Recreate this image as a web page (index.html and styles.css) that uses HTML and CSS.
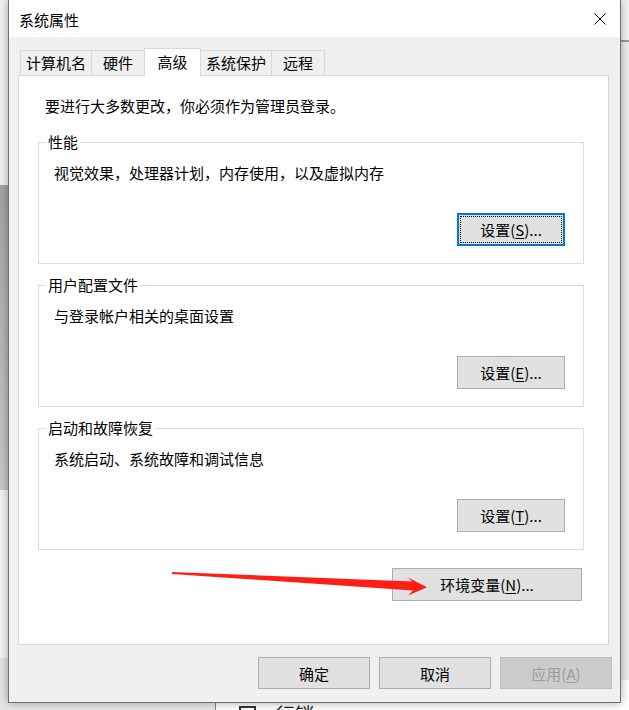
FILE: index.html
```html
<!DOCTYPE html>
<html lang="zh-CN">
<head>
    <meta charset="UTF-8">
    <meta name="viewport" content="width=device-width, initial-scale=1.0">
    <title>系统属性</title>
    <link rel="stylesheet" href="styles.css">
</head>
<body>
    <div class="desktop">
        <div class="bg-app">
            <span class="bg-icon"></span>
            <span class="bg-text">行销</span>
        </div>

        <div class="window">
            <div class="titlebar">
                <span class="title">系统属性</span>
                <span class="close">
                    <svg width="12" height="12" viewBox="0 0 12 12">
                        <path d="M0.5 0.5L11.5 11.5M11.5 0.5L0.5 11.5" stroke="#000" stroke-width="1" fill="none"/>
                    </svg>
                </span>
            </div>

            <div class="tabs">
                <div class="tab">计算机名</div>
                <div class="tab">硬件</div>
                <div class="tab active">高级</div>
                <div class="tab">系统保护</div>
                <div class="tab">远程</div>
            </div>

            <div class="panel">
                <p class="notice">要进行大多数更改，你必须作为管理员登录。</p>

                <fieldset class="group">
                    <legend>性能</legend>
                    <p class="desc">视觉效果，处理器计划，内存使用，以及虚拟内存</p>
                    <div class="actions">
                        <button class="btn btn-set focus">设置(<u>S</u>)...</button>
                    </div>
                </fieldset>

                <fieldset class="group">
                    <legend>用户配置文件</legend>
                    <p class="desc">与登录帐户相关的桌面设置</p>
                    <div class="actions">
                        <button class="btn btn-set">设置(<u>E</u>)...</button>
                    </div>
                </fieldset>

                <fieldset class="group">
                    <legend>启动和故障恢复</legend>
                    <p class="desc">系统启动、系统故障和调试信息</p>
                    <div class="actions">
                        <button class="btn btn-set">设置(<u>T</u>)...</button>
                    </div>
                </fieldset>

                <div class="env-row">
                    <button class="btn btn-env">环境变量(<u>N</u>)...</button>
                </div>
            </div>

            <div class="footer">
                <button class="btn btn-dlg">确定</button>
                <button class="btn btn-dlg">取消</button>
                <button class="btn btn-dlg" disabled>应用(<u>A</u>)</button>
            </div>
        </div>

        <svg class="arrow" width="629" height="710" viewBox="0 0 629 710">
            <polygon points="172,572 412,581.5 408,577.5 427,587.3 408,595.5 413,590.5 172,574" fill="#ff1e16"/>
        </svg>
    </div>
</body>
</html>
```

FILE: styles.css
```css
* {
    box-sizing: border-box;
}

body {
    margin: 0;
    font-family: "Noto Sans CJK SC", "Noto Sans", sans-serif;
    font-size: 15px;
    color: #000;
}

.desktop {
    position: relative;
    width: 629px;
    height: 710px;
    overflow: hidden;
    background:
        linear-gradient(to bottom, #f3f3f3 0 40px, #9a9a9a 40px 42px, #ececec 42px) right top / 9px 100% no-repeat,
        linear-gradient(to bottom, #f2f2f2 0 185px, #a4a4a4 185px, #c8c8c8 490px, #f4f4f4 490px 658px, #e4e4e4 658px) left top / 8px 100% no-repeat,
        #e9e9e9;
}

/* app behind the dialog */
.bg-app {
    position: absolute;
    left: 215px;
    top: 680px;
    width: 420px;
    height: 40px;
    background: #fff;
    border-left: 1px solid #8a8a8a;
    display: flex;
    align-items: flex-start;
    padding-top: 23px;
}

.bg-icon {
    width: 17px;
    height: 12px;
    margin: 3px 0 0 23px;
    border: 2px solid #333;
}

.bg-text {
    margin-left: 20px;
    font-size: 19px;
    line-height: 22px;
    color: #222;
}

/* dialog */
.window {
    position: absolute;
    left: 8px;
    top: 0;
    width: 613px;
    height: 703px;
    background: #f0f0f0;
    border: 1px solid #6e6e6e;
    border-top: none;
    box-shadow: 0 0 9px rgba(0, 0, 0, 0.35);
}

.titlebar {
    height: 37px;
    background: #fff;
    display: flex;
    align-items: center;
    justify-content: space-between;
    padding-left: 10px;
}

.title {
    line-height: 18px;
    padding-top: 3px;
}

.close {
    width: 40px;
    height: 37px;
    display: flex;
    align-items: center;
    justify-content: center;
    padding-top: 1px;
}

.close svg {
    display: block;
}

.tabs {
    display: flex;
    align-items: flex-start;
    height: 28px;
    margin-top: 11px;
    padding-left: 11px;
}

.tab {
    height: 25px;
    min-width: 54px;
    margin-top: 2px;
    padding: 0 5px;
    background: #f0f0f0;
    border: 1px solid #d9d9d9;
    border-bottom: none;
    display: flex;
    align-items: center;
    justify-content: center;
    line-height: 18px;
}

.tab + .tab {
    margin-left: -1px;
}

.tab.active {
    position: relative;
    z-index: 1;
    height: 28px;
    min-width: 57px;
    margin-top: 0;
    background: #fff;
    padding-bottom: 1px;
}

.panel {
    margin: -1px 11px 0 9px;
    background: #fff;
    border: 1px solid #d9d9d9;
    padding: 21px 24px 43px 19px;
}

.notice {
    margin: 0 0 18px 7px;
    line-height: 18px;
}

.group {
    margin: 0;
    min-width: 0;
    padding: 0 18px 17px 15px;
    border: 1px solid #dcdcdc;
}

.group + .group {
    margin-top: 12px;
}

.group legend {
    margin-left: -8px;
    padding: 0 2px;
    line-height: 18px;
}

.desc {
    margin: 13px 0 0;
    line-height: 18px;
}

.actions {
    display: flex;
    justify-content: flex-end;
    margin-top: 31px;
}

.btn {
    height: 33px;
    padding: 0;
    font-family: inherit;
    font-size: 15px;
    color: #000;
    background: #e1e1e1;
    border: 1px solid #adadad;
}

.btn u {
    text-underline-offset: 2px;
}

.btn-set {
    width: 108px;
}

.btn.focus {
    border: 2px solid #0078d7;
    outline: 1px dotted #000;
    outline-offset: -4px;
}

.env-row {
    display: flex;
    justify-content: flex-end;
    margin-top: 18px;
    padding-right: 2px;
}

.btn-env {
    width: 190px;
}

.footer {
    display: flex;
    justify-content: flex-end;
    gap: 9px;
    padding: 12px 8px 0 0;
}

.btn-dlg {
    width: 112px;
    height: 32px;
}

.btn-dlg:disabled {
    background: #cccccc;
    border-color: #bfbfbf;
    color: #9c9c9c;
}

.arrow {
    position: absolute;
    left: 0;
    top: 0;
    pointer-events: none;
}
```
